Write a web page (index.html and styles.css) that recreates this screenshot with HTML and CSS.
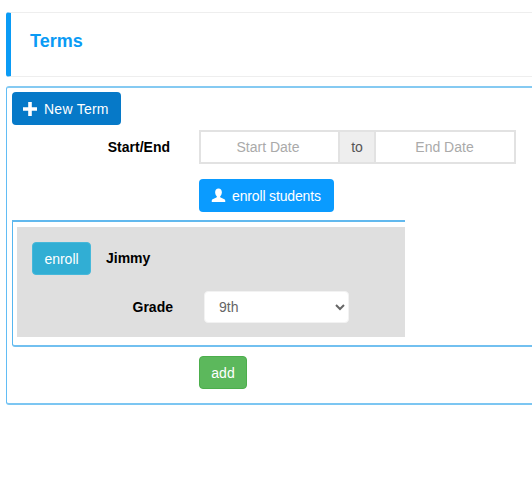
FILE: index.html
```html
<!DOCTYPE html>
<html lang="en">
<head>
<meta charset="utf-8">
<title>Terms</title>
<link rel="stylesheet" href="styles.css">
</head>
<body>
<header class="page-header"><h1>Terms</h1></header>
<section class="panel">
  <button class="btn btn-new" type="button">
    <svg class="icon-plus" viewBox="0 0 14 14" aria-hidden="true"><path d="M5.200 0h3.600v5.200H14v3.600H8.800V14H5.200V8.800H0V5.200h5.200z"/></svg>
    New Term
  </button>
  <div class="row-dates">
    <label class="label-dates">Start/End</label>
    <div class="date-group">
      <input class="date-input" type="text" placeholder="Start Date">
      <div class="date-to">to</div>
      <input class="date-input date-end" type="text" placeholder="End Date">
    </div>
  </div>
  <div class="row-enroll">
    <button class="btn btn-students" type="button">
      <svg class="icon-user" viewBox="0 0 16 16" aria-hidden="true"><path d="M8 0.500c2.300 0 3.600 1.600 3.600 3.900 0 1.600-.7 3.200-1.600 4.200-.4.500-.3 1.200.3 1.500l3.400 1.600c1 .5 1.500 1.100 1.500 2V15H.8v-1.300c0-.9.500-1.500 1.500-2l3.400-1.600c.6-.3.7-1 .3-1.500-.9-1-1.600-2.600-1.600-4.200C4.400 2.100 5.700.5 8 .5z"/></svg>
      enroll students
    </button>
  </div>
  <div class="student-box">
    <div class="student-box-top"></div>
    <div class="student">
      <div class="student-top">
        <button class="btn btn-enroll" type="button">enroll</button>
        <span class="student-name">Jimmy</span>
      </div>
      <div class="student-grade">
        <label class="label-grade">Grade</label>
        <select class="select">
          <option>9th</option>
        </select>
      </div>
    </div>
  </div>
  <div class="row-add"><button class="btn btn-add" type="button">add</button></div>
</section>
</body>
</html>
```
FILE: styles.css
```css
* { box-sizing: border-box; }
html, body { overflow: hidden; }
body {
  margin: 0;
  width: 532px;
  height: 500px;
  background: #fff;
  font-family: "Liberation Sans", Arial, sans-serif;
  font-size: 14px;
  color: #000;
  padding: 12px 0 0 6px;
}
.page-header {
  width: 526px;
  height: 65px;
  border: 1px solid #eee;
  border-right: 0;
  border-left: 5px solid #0a9bf5;
  border-radius: 3px 0 0 3px;
  padding: 0 0 6px 19px;
  display: flex;
  align-items: center;
}
.page-header h1 {
  margin: 0;
  font-size: 18px;
  font-weight: bold;
  color: #0a9bf5;
}
.panel {
  width: 526px;
  height: 319px;
  margin-top: 9px;
  border: 1px solid #62bdf5;
  border-top: 2px solid #85caf2;
  border-bottom: 2px solid #7cc6f2;
  border-right: 0;
  border-radius: 3px 0 0 3px;
  padding: 4px 0 0 5px;
}
.btn {
  border: 1px solid transparent;
  border-radius: 4px;
  color: #fff;
  font-family: inherit;
  font-size: 14px;
  padding: 0;
  display: inline-flex;
  align-items: center;
  justify-content: center;
}
.btn-new {
  width: 109px;
  height: 33px;
  background: #0679c8;
  gap: 7px;
  justify-content: flex-start;
  padding-left: 10px;
  letter-spacing: 0.25px;
}
.icon-plus { width: 14px; height: 14px; fill: #fff; }
.row-dates {
  display: flex;
  align-items: center;
  margin-top: 5px;
}
.label-dates {
  width: 158px;
  text-align: right;
  font-weight: bold;
  margin-right: 29px;
}
.date-group {
  display: flex;
  height: 34px;
  width: 317px;
  border: 2px solid #e2e2e2;
}
.date-input {
  width: 137px;
  border: 0;
  padding: 0 3px 0 0;
  margin: 0;
  background: #fff;
  font-family: inherit;
  font-size: 14px;
  text-align: center;
  outline: none;
}
.date-input::placeholder { color: #aaa; opacity: 1; }
.date-end { width: 137px; padding: 0; }
.date-to {
  width: 38px;
  background: #eee;
  color: #555;
  border-left: 2px solid #e2e2e2;
  border-right: 2px solid #e2e2e2;
  display: flex;
  align-items: center;
  justify-content: center;
}
.row-enroll { margin: 15px 0 0 187px; }
.btn-students {
  width: 135px;
  height: 33px;
  background: #0a9bff;
  gap: 6px;
  justify-content: flex-start;
  padding-left: 11px;
  letter-spacing: -0.15px;
}
.icon-user { width: 15px; height: 15px; fill: #fff; }
.student-box {
  width: 520px;
  height: 127px;
  margin-top: 8px;
  border-left: 1px solid #55b6f0;
  border-bottom: 2px solid #72c0f0;
  border-bottom-left-radius: 3px;
  padding: 0 0 0 4px;
}
.student-box-top {
  width: 393px;
  height: 2px;
  margin: 0 0 5px -5px;
  background: #62b9ee;
}
.student {
  width: 388px;
  height: 110px;
  background: #dfdfdf;
  padding: 15px 14px 0 15px;
}
.student-top { display: flex; align-items: center; gap: 15px; }
.btn-enroll {
  width: 59px;
  height: 33px;
  background: #31aed4;
  border-color: #46b8da;
}
.student-name { font-weight: bold; margin-bottom: 2px; }
.student-grade {
  display: flex;
  align-items: center;
  margin-top: 16px;
}
.label-grade {
  width: 141px;
  text-align: right;
  font-weight: bold;
  margin-right: 31px;
}
.select {
  width: 145px;
  height: 32px;
  background: #fff;
  border: 1px solid #f2f2f2;
  border-radius: 4px;
  padding: 0 0 0 10px;
  color: #666;
  font-family: inherit;
  font-size: 14px;
}
.row-add { margin: 9px 0 0 187px; }
.btn-add {
  width: 48px;
  height: 33px;
  background: #5cb85c;
  border-color: #4cae4c;
}
```
